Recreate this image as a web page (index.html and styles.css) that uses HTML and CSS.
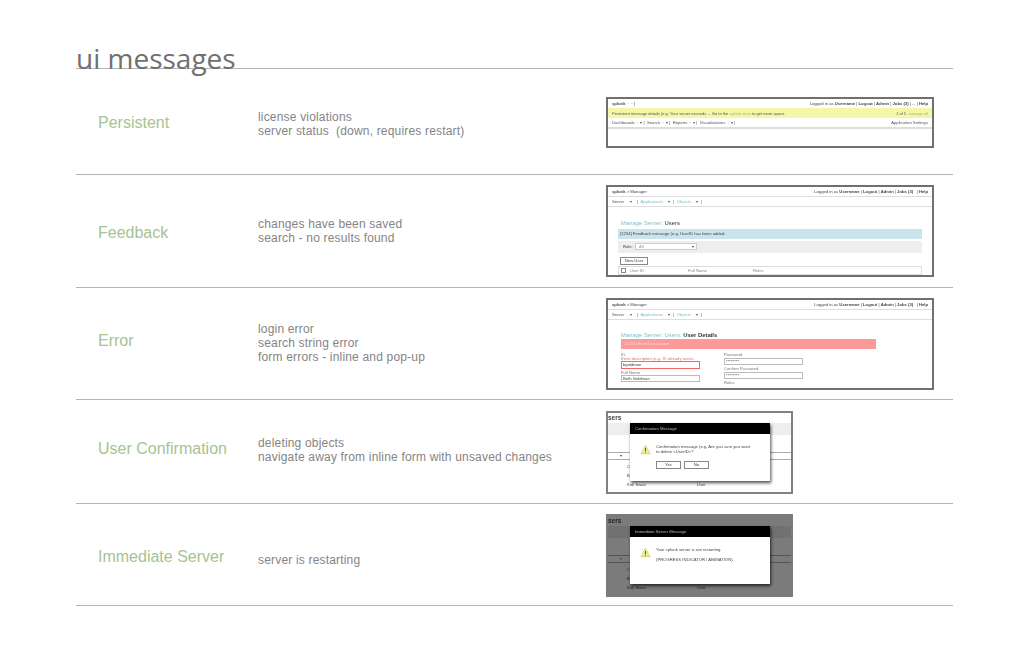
FILE: index.html
```html
<!DOCTYPE html>
<html lang="en">
<head>
    <meta charset="UTF-8">
    <title>ui messages</title>
    <link rel="stylesheet" href="styles.css">
</head>
<body>
    <div class="slide">
        <h1 class="title">ui messages</h1>

        <!-- Persistent -->
        <div class="row row-persistent">
            <div class="label">Persistent</div>
            <div class="desc">license violations<br>server status&nbsp; (down, requires restart)</div>
            <div class="thumb thumb-wide thumb-persistent">
                <div class="top-bar">
                    <span><b>splunk</b> &nbsp;: &nbsp;<span class="tick">•</span> ]</span>
                    <span>Logged in as <b>Username</b> | <b>Logout</b> | <b>Admin</b> | <b>Jobs (3)</b> | ... | <b>Help</b></span>
                </div>
                <div class="yellow-bar">
                    <span>Persistent message details (e.g. Your server exceeds ... Go to the <span class="link">splunk store</span> to get more space.</span>
                    <span>1 of 5 &nbsp;<span class="link">manage all</span></span>
                </div>
                <div class="nav-bar">
                    <span>Dashboards &nbsp;: &nbsp;▾ | &nbsp;Search &nbsp;: &nbsp;▾ | &nbsp;Reports &nbsp;: &nbsp;▾ | &nbsp;Visualizations &nbsp;: &nbsp;▾ |</span>
                    <span>Application Settings</span>
                </div>
            </div>
        </div>

        <!-- Feedback -->
        <div class="row row-feedback">
            <div class="label">Feedback</div>
            <div class="desc">changes have been saved<br>search - no results found</div>
            <div class="thumb thumb-wide thumb-feedback">
                <div class="top-bar">
                    <span><b>splunk</b> &gt; Manager</span>
                    <span>Logged in as <b>Username</b> | <b>Logout</b> | <b>Admin</b> | <b>Jobs (3)</b> &nbsp; | <b>Help</b></span>
                </div>
                <div class="nav-bar nav-manager">
                    <span>Server &nbsp;▾ &nbsp;| <span class="link">Applications</span> &nbsp;▾ | <span class="link">Objects</span> &nbsp;▾ |</span>
                </div>
                <div class="page-title"><span class="link">Manage Server: </span>Users</div>
                <div class="blue-bar">[1234] Feedback message (e.g. UserID has been added.</div>
                <div class="filter-bar">Role: <span class="fake-select">All <i>▾</i></span></div>
                <span class="fake-button new-user">New User</span>
                <div class="table-head">
                    <span class="check"></span>
                    <span class="col-id">User ID</span>
                    <span class="col-name">Full Name</span>
                    <span>Roles</span>
                </div>
                <div class="table-body"><span class="scroll-box"></span></div>
            </div>
        </div>

        <!-- Error -->
        <div class="row row-error">
            <div class="label">Error</div>
            <div class="desc">login error<br>search string error<br>form errors - inline and pop-up</div>
            <div class="thumb thumb-wide thumb-error">
                <div class="top-bar">
                    <span><b>splunk</b> &gt; Manager</span>
                    <span>Logged in as <b>Username</b> | <b>Logout</b> | <b>Admin</b> | <b>Jobs (3)</b> &nbsp; | <b>Help</b></span>
                </div>
                <div class="nav-bar nav-manager">
                    <span>Server &nbsp;▾ &nbsp;| <span class="link">Applications</span> &nbsp;▾ | <span class="link">Objects</span> &nbsp;▾ |</span>
                </div>
                <div class="page-title page-title-error"><span class="link">Manage Server: Users: </span>User Details</div>
                <div class="red-bar">[1234] Error Description</div>
                <div class="form-cols">
                    <div class="form-col">
                        <div class="field-label">ID</div>
                        <div class="field-error">Error description (e.g. ID already exists.</div>
                        <div class="field field-bad">bgoldman</div>
                        <div class="field-label">Full Name</div>
                        <div class="field">Beth Goldman</div>
                    </div>
                    <div class="form-col">
                        <div class="field-label">Password</div>
                        <div class="field field-pass">********</div>
                        <div class="field-label">Confirm Password</div>
                        <div class="field field-pass">********</div>
                        <div class="field-label">Roles</div>
                    </div>
                </div>
            </div>
        </div>

        <!-- User Confirmation -->
        <div class="row row-confirm">
            <div class="label">User Confirmation</div>
            <div class="desc">deleting objects<br>navigate away from inline form with unsaved changes</div>
            <div class="thumb thumb-narrow thumb-confirm">
                <div class="under-title">sers</div>
                <div class="under-band"></div>
                <div class="under-line">▾</div>
                <div class="under-names">
                    <div>Chris Lee</div>
                    <div>Bob Fox</div>
                    <div class="under-last"><span>Kirk Swan</span><span>User</span></div>
                </div>
                <div class="modal">
                    <div class="modal-head">Confirmation Message</div>
                    <div class="modal-body">
                        <svg class="warn" viewBox="0 0 20 20"><path d="M10 2 L18.5 18 H1.5 Z" fill="#ecec8c" stroke="#c9c66a"/><path d="M10 7 V13 M10 14.5 V16" stroke="#444" stroke-width="1.6"/></svg>
                        <div class="modal-text">
                            Confirmation message (e.g. Are you sure you want<br>to delete &lt;UserID&gt;?
                            <div class="modal-buttons"><span class="fake-button">Yes</span><span class="fake-button">No</span></div>
                        </div>
                    </div>
                </div>
            </div>
        </div>

        <!-- Immediate Server -->
        <div class="row row-immediate">
            <div class="label">Immediate Server</div>
            <div class="desc">server is restarting</div>
            <div class="thumb thumb-narrow thumb-immediate">
                <div class="under-title">sers</div>
                <div class="under-band"></div>
                <div class="under-line">▾</div>
                <div class="under-names">
                    <div>Chris Lee</div>
                    <div>Bob Fox</div>
                    <div class="under-last"><span>Kirk Swan</span><span>User</span></div>
                </div>
                <div class="modal modal-server">
                    <div class="modal-head">Immediate Server Message</div>
                    <div class="modal-body">
                        <svg class="warn" viewBox="0 0 20 20"><path d="M10 2 L18.5 18 H1.5 Z" fill="#ecec8c" stroke="#c9c66a"/><path d="M10 7 V13 M10 14.5 V16" stroke="#444" stroke-width="1.6"/></svg>
                        <div class="modal-text">
                            Your splunk server is not restarting.
                            <div class="modal-progress">(PROGRESS INDICATOR / ANIMATION)</div>
                        </div>
                    </div>
                </div>
            </div>
        </div>
    </div>
</body>
</html>
```

FILE: styles.css
```css
html, body {
    margin: 0;
    background: #fff;
}
body {
    font-family: "Liberation Sans", Arial, sans-serif;
    color: #777;
    height: 663px;
    overflow: hidden;
}
.slide {
    width: 877px;
    margin-left: 76px;
}
.title {
    display: flex;
    align-items: flex-end;
    height: 68px;
    margin: 0;
    border-bottom: 1px solid #b5b5b5;
    font-family: "Open Sans", sans-serif;
    font-size: 28px;
    font-weight: 400;
    line-height: 20px;
    color: #707070;
}
.row {
    display: grid;
    grid-template-columns: 182px 348px auto;
    align-items: center;
    border-bottom: 1px solid #b5b5b5;
    box-sizing: border-box;
}
.row-persistent { height: 106px; }
.row-feedback { height: 113px; }
.row-error { height: 112px; }
.row-confirm { height: 104px; }
.row-immediate { height: 102px; }

.label {
    padding-left: 22px;
    font-size: 16px;
    color: #a6c390;
    white-space: nowrap;
}
.desc {
    font-size: 12px;
    line-height: 14px;
    letter-spacing: 0.18px;
    color: #848484;
    white-space: nowrap;
}

/* nudges, each row sits its text a bit differently */
.row-persistent .label { padding-top: 2px; }
.row-persistent .desc { padding-top: 4px; }
.row-feedback .label { padding-top: 4px; }
.row-error .label { padding-bottom: 6px; }
.row-error .desc { padding-bottom: 2px; }
.row-confirm .label { padding-bottom: 6px; }
.row-confirm .desc { padding-bottom: 4px; }
.row-immediate .label { padding-top: 4px; }
.row-immediate .desc { padding-top: 10px; }
.row-persistent .thumb, .row-confirm .thumb, .row-immediate .thumb { margin-top: 2px; }

/* small screenshots, soft like the scaled images */
.thumb {
    position: relative;
    box-sizing: border-box;
    overflow: hidden;
    background: #fff;
    border: 2px solid #707070;
    filter: blur(0.75px);
    font-size: 4.2px;
    line-height: 5px;
    color: #444;
    white-space: nowrap;
}
.thumb-wide { width: 328px; }
.thumb-narrow { width: 187px; height: 83px; }
.thumb-persistent { height: 51px; }
.thumb-feedback { height: 92px; }
.thumb-error { height: 92px; }

.top-bar, .yellow-bar, .nav-bar {
    display: flex;
    justify-content: space-between;
    align-items: center;
    padding: 0 4px;
}
.top-bar { height: 9px; }
.yellow-bar {
    height: 10px;
    background: #f6f6a8;
    color: #555;
    font-size: 4px;
}
.nav-bar {
    height: 9px;
    border-bottom: 2px solid #ddd;
    color: #555;
}
.nav-manager {
    border-top: 1px solid #ddd;
    border-bottom: 1px solid #ddd;
    word-spacing: 1.5px;
}
.link { color: #7cc0cc; }
.yellow-bar .link { color: #9cc070; }
.tick { color: #d89a30; }

.page-title {
    margin: 12px 0 2px 13px;
    font-size: 5.9px;
    line-height: 8px;
    color: #333;
}
.page-title-error {
    margin: 11px 0 0 13px;
    font-weight: bold;
}
.page-title-error .link { font-weight: normal; }
.blue-bar {
    margin: 0 10px;
    height: 10px;
    line-height: 10px;
    padding-left: 2px;
    background: #cbe4ec;
}
.filter-bar {
    margin: 2px 10px 4px;
    height: 12px;
    line-height: 12px;
    padding-left: 5px;
    background: #eee;
}
.fake-select {
    display: inline-block;
    box-sizing: border-box;
    width: 62px;
    height: 7px;
    line-height: 5px;
    margin-left: 1px;
    padding-left: 3px;
    background: #fff;
    border: 1px solid #ccc;
    color: #999;
}
.fake-select i {
    float: right;
    font-style: normal;
    margin-right: 2px;
    color: #444;
}
.fake-button {
    display: inline-block;
    box-sizing: border-box;
    height: 8px;
    line-height: 6px;
    text-align: center;
    border: 1px solid #888;
    background: #fff;
}
.new-user {
    display: block;
    width: 28px;
    margin-left: 12px;
}
.table-head {
    display: flex;
    align-items: center;
    height: 7px;
    margin: 1px 10px 0;
    border: 1px solid #ddd;
    color: #888;
}
.check {
    width: 3px;
    height: 3px;
    margin: 0 4px 0 2px;
    border: 1px solid #888;
}
.col-id { width: 58px; }
.col-name { width: 65px; }
.table-body {
    display: flex;
    justify-content: flex-end;
    height: 5px;
    margin: 0 10px;
    padding: 1px 1px 0 0;
    border: solid #ccc;
    border-width: 0 1px;
}
.scroll-box {
    width: 3px;
    height: 4px;
    border: 1px solid #888;
}

.red-bar {
    margin: 0 56px 0 13px;
    height: 10px;
    line-height: 10px;
    padding-left: 4px;
    background: #fb9a98;
    color: #fcd5d4;
}
.form-cols {
    display: flex;
    gap: 24px;
    margin: 2px 0 0 13px;
}
.form-col { width: 79px; }
.field-label {
    line-height: 4px;
    margin-top: 2px;
    color: #777;
}
.field-error {
    line-height: 4px;
    color: #ee6a66;
}
.field {
    box-sizing: border-box;
    height: 7px;
    line-height: 5px;
    padding-left: 1px;
    margin-bottom: 2px;
    border: 1px solid #bbb;
}
.field-bad {
    height: 8px;
    line-height: 6px;
    border-color: #ee6a66;
}
.field-pass { margin-top: 1px; }

.under-title {
    margin: 1px 0 0 0;
    font-size: 6.5px;
    line-height: 8px;
    font-weight: bold;
    color: #444;
}
.under-band {
    height: 12px;
    margin-top: 1px;
    background: #eee;
}
.under-line {
    height: 6px;
    line-height: 6px;
    margin-top: 17px;
    padding-left: 12px;
    border-top: 1px solid #aaa;
    border-bottom: 1px solid #aaa;
}
.under-names {
    margin: 2px 0 0 19px;
    line-height: 9px;
}
.under-last {
    display: flex;
    gap: 51px;
}
.thumb-confirm { border-color: #808080; }
.thumb-immediate {
    background: #7b7b7b;
    border-color: #7b7b7b;
}
.thumb-immediate .under-band { background: #717171; }
.thumb-immediate .under-line { border-color: #555; }
.thumb-immediate .under-names, .thumb-immediate .under-title { color: #222; }

.modal {
    position: absolute;
    left: 22px;
    top: 10px;
    width: 140px;
    height: 58px;
    box-sizing: border-box;
    background: #fff;
    box-shadow: 1px 2px 3px rgba(0, 0, 0, 0.7);
}
.modal-head {
    height: 11px;
    line-height: 11px;
    padding-left: 5px;
    background: #000;
    color: #bbb;
}
.modal-body {
    display: flex;
    gap: 5px;
    padding: 10px 0 0 10px;
}
.warn {
    width: 11px;
    height: 11px;
    flex: none;
}
.modal-text {
    width: 100px;
    white-space: nowrap;
    line-height: 5px;
}
.modal-buttons {
    display: flex;
    gap: 3px;
    margin-top: 7px;
}
.modal-buttons .fake-button { width: 25px; }
.modal-progress {
    margin-top: 5px;
    white-space: nowrap;
}
```
